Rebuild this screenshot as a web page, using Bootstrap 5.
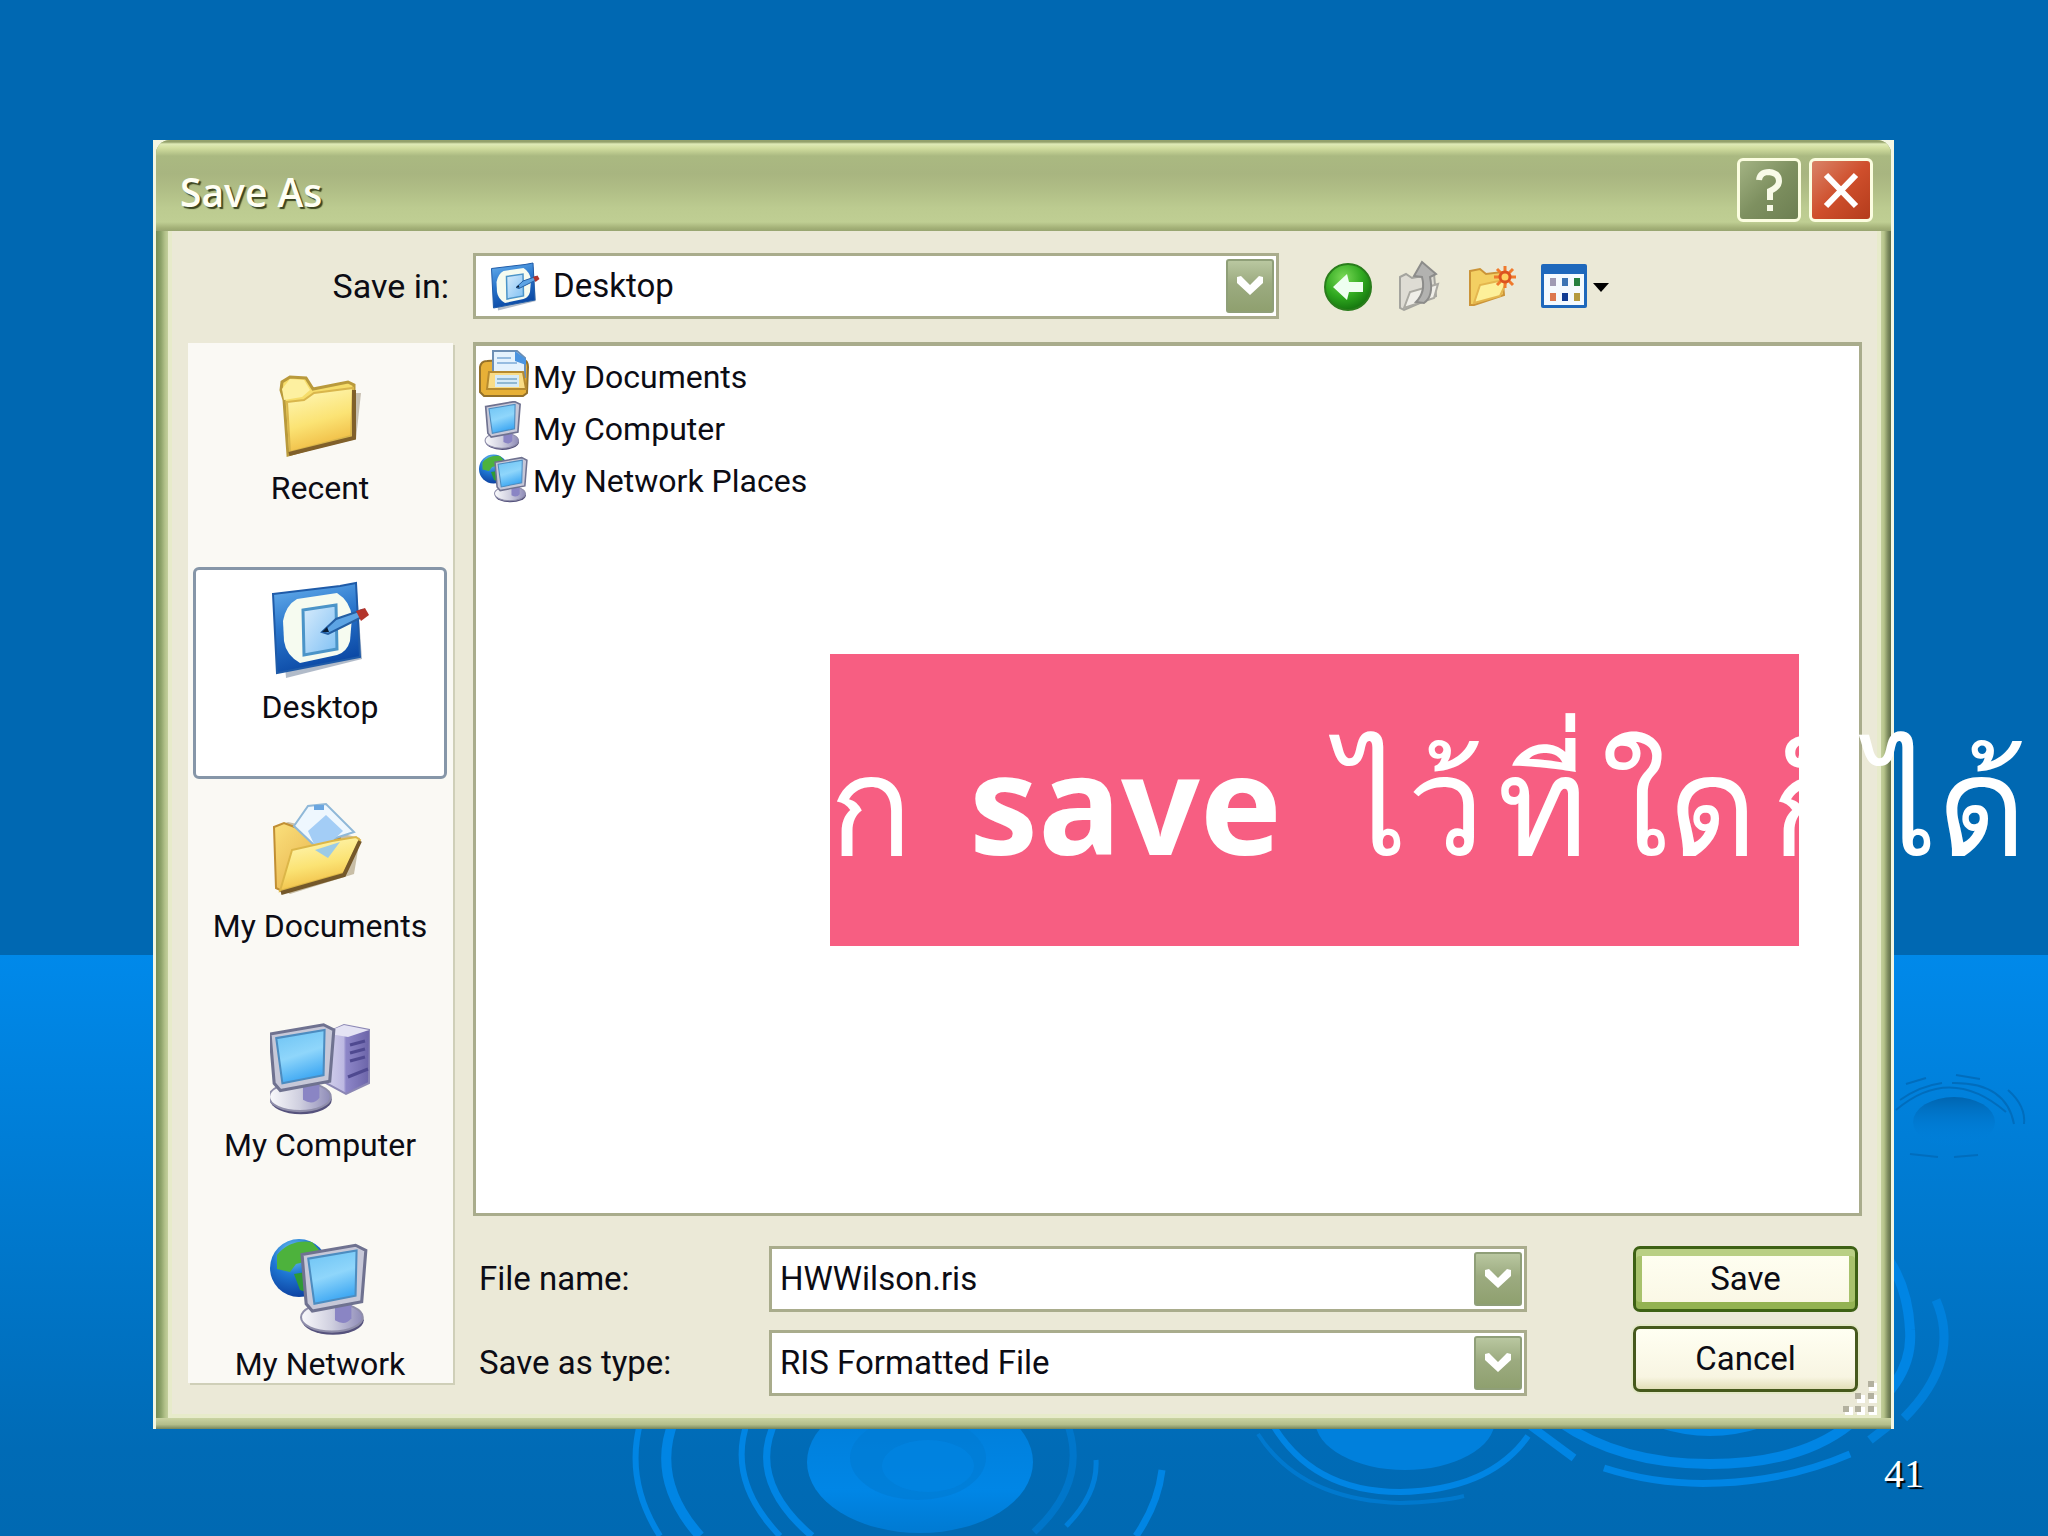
<!DOCTYPE html>
<html lang="en">
<head>
<meta charset="utf-8">
<meta name="viewport" content="width=device-width, initial-scale=1">
<title>Save As</title>
<link href="https://cdn.jsdelivr.net/npm/bootstrap@5.3.0/dist/css/bootstrap.min.css" rel="stylesheet">
<style>
body{margin:0;background:#0068b2;font-family:Roboto,"Liberation Sans",sans-serif;font-size:33px;line-height:40px;color:#0c0c14}
.slide{position:relative;min-height:100vh;padding:140px 154px 0 153px;overflow:hidden;background:#0068b2}
.water{position:absolute;inset:0;width:100%;height:100%}
.dialog-frame{position:relative;background:#f3f6e2;padding:0 3px}
.win{border-radius:14px 14px 0 0;background:linear-gradient(90deg,#748c54 0,#8ea36a 5px,#b3c28a 9px,#c3cf9c 12px,#c3cf9c calc(100% - 10px),#b6c38a calc(100% - 7px),#7c8a5e calc(100% - 3px),#5f6d48 100%);padding:0 10px 11px 12px;position:relative}
.win::after{content:"";position:absolute;left:0;right:0;bottom:0;height:11px;background:linear-gradient(#c9d3a2,#b2bd8a 60%,#74845a);z-index:0}
.title-strip{margin:0 -10px 0 -12px;height:91px;padding:0 18px 0 24px;border-radius:14px 14px 0 0;background:linear-gradient(#93a06b 0,#93a06b 2px,#dfeab6 4px,#d2de9f 8px,#aab981 16px,#a8b580 34px,#b0be86 50px,#bccb90 68px,#bfce93 82px,#a3b077 88px,#98a570 91px)}
.title-text{font-family:"Open Sans","Noto Sans",sans-serif;font-weight:600;font-size:39px;line-height:48px;color:#fffff4;text-shadow:2px 2px 1px #3c4520;margin:0;padding-top:12px}
.cap-btn{width:64px;height:64px;padding:0;border:3px solid #fbfde0;border-radius:6px;background:linear-gradient(135deg,#a3b383,#7e9060 50%,#6d7f52);display:block}
.cap-btn svg{display:block;width:100%;height:100%}
.cap-close{background:linear-gradient(135deg,#d98468,#cf4f2c 50%,#b43c1c)}
.face{background:#ebe9d7;padding:22px 19px 20px 20px;box-shadow:inset 4px -4px 0 #e7ebca,inset -4px 0 0 #e7ebca}
.top-row{margin-bottom:23px}
.side-w{width:265px;flex:none}
.look-label{font-size:34px}
.combo{height:66px;background:#fff;border:3px solid #a9ac8c;padding:3px 2px 3px 3px;display:flex;align-items:stretch}
.combo select,.combo input{appearance:none;border:0;background:transparent;outline:0;flex:1 1 0;min-width:0;padding:0;color:inherit;font:inherit;line-height:40px}
.combo-save{width:806px;padding-left:14px;margin-left:20px}
.combo-save select{margin-left:13px}
.arrow-box{width:48px;flex:none;border:2px solid #8f9f78;border-radius:3px;background:linear-gradient(#b9c7a0,#9cab80 45%,#8fa06f);padding:0;display:block}
.arrow-box svg{display:block;width:100%;height:100%}
.tool{border:0;background:none;padding:0;display:block;line-height:0}
.tools{margin-left:45px}
.places{background:#faf9f4;box-shadow:2px 2px 0 #cfcfb8;padding:5px 6px 0 5px;margin:1px 0 15px;display:flex;flex-direction:column;gap:7px;overflow:hidden}
.place{height:212px;border:3px solid transparent;border-radius:6px;background:none;padding:9px 0 0;text-align:center;color:inherit;text-decoration:none;display:block;width:100%;font-size:32px}
.place svg{display:block;width:100px;height:100px;margin:0 auto 8px}
.place-on{background:#fff;border-color:#8696a8}
.place-cut{height:159px}
.right-pane{margin-left:20px}
.files{height:874px;background:#fff;border:3px solid #a9ac8c;border-top-width:4px;position:relative;padding:3px 3px}
.file-row{display:flex;align-items:center;height:52px;font-size:32px;gap:4px;padding-top:3px;color:inherit;text-decoration:none}
.file-row svg{width:50px;height:50px;flex:none;margin-top:-6px}
.note{position:absolute;left:354px;right:60px;top:308px;height:292px;background:#f75e82;display:flex;justify-content:center;align-items:center;white-space:nowrap;color:#fff;font-family:"Noto Sans","Open Sans",sans-serif;font-weight:400;font-size:138px;line-height:200px;padding:2px 0 0 12px;z-index:2}
.note b{font-weight:700;margin:0 20px}
.note i{font-style:normal;margin-right:13px}
.form-area{margin-top:30px}
.entry{display:grid;grid-template-columns:290px 758px;gap:18px 0;padding-left:6px}
.entry .combo{padding-left:8px}
.push{width:225px;height:66px;border:3px solid #46591c;border-radius:7px;background:linear-gradient(#fffff2,#f8f5e2 80%,#e2dfb8);padding:0;color:inherit;display:block;box-shadow:0 0 0 2px #e4e8c8}
.push-main{border-color:#3d6114;background:linear-gradient(#fffff2,#faf7e4);box-shadow:inset 0 7px 0 #b9cf84,inset 0 -7px 0 #93b352,inset 6px 0 0 #a8c26c,inset -6px 0 0 #a8c26c}
.grip{position:absolute;right:14px;bottom:14px;width:36px;height:36px;z-index:1}
.page-no{position:relative;text-align:right;font-family:"Liberation Serif",serif;font-size:40px;line-height:46px;color:#fff;text-shadow:2px 2px 1px #000;margin:0 -30px 0 0;padding-top:22px}
</style>
<script src="https://cdn.jsdelivr.net/npm/bootstrap@5.3.0/dist/js/bootstrap.bundle.min.js"></script>
</head>
<body>
<svg width="0" height="0" class="position-absolute" aria-hidden="true">
<defs>
<linearGradient id="yel" x1="0" y1="0" x2="0.3" y2="1"><stop offset="0" stop-color="#fff9bd"/><stop offset=".6" stop-color="#fbe374"/><stop offset="1" stop-color="#f0bd45"/></linearGradient>
<linearGradient id="yel2" x1="0" y1="0" x2="1" y2="1"><stop offset="0" stop-color="#fbe07c"/><stop offset="1" stop-color="#e0a43c"/></linearGradient>
<linearGradient id="scr" x1="0.2" y1="0" x2="0.5" y2="1"><stop offset="0" stop-color="#6fc4f4"/><stop offset=".5" stop-color="#8fd6fb"/><stop offset="1" stop-color="#38a4f2"/></linearGradient>
<linearGradient id="deskb" x1="0" y1="0" x2="0.3" y2="1"><stop offset="0" stop-color="#6ab2ee"/><stop offset=".5" stop-color="#2a76cc"/><stop offset="1" stop-color="#0c4aa6"/></linearGradient>
<linearGradient id="paper" x1="0" y1="0" x2="1" y2="1"><stop offset="0" stop-color="#d8ecfc"/><stop offset="1" stop-color="#7fc0f4"/></linearGradient>
<linearGradient id="stand" x1="0" y1="0" x2="1" y2="0"><stop offset="0" stop-color="#fafafc"/><stop offset=".5" stop-color="#cfcfdf"/><stop offset="1" stop-color="#8e8bb8"/></linearGradient>
<linearGradient id="tower" x1="0" y1="0" x2="1" y2="0"><stop offset="0" stop-color="#d8d6ee"/><stop offset=".45" stop-color="#bdb9e2"/><stop offset=".5" stop-color="#8d86c8"/><stop offset="1" stop-color="#6b64a8"/></linearGradient>
<radialGradient id="glb" cx=".4" cy=".25" r=".8"><stop offset="0" stop-color="#7fd0f0"/><stop offset=".45" stop-color="#1f78d4"/><stop offset="1" stop-color="#0b3c9c"/></radialGradient>
<radialGradient id="grn" cx=".4" cy=".3" r=".7"><stop offset="0" stop-color="#7bd957"/><stop offset=".6" stop-color="#2fa81f"/><stop offset="1" stop-color="#16780f"/></radialGradient>
<symbol id="i-folder" viewBox="0 0 100 100"><path d="M15 34 21 95 86 79 91 33z" fill="#8a7a60" opacity=".45"/><path d="M11 30 12 22 20 17 36 18 43 29 78 22 84 25 84 76 18 95 14 40z" fill="#f6dd6a" stroke="#b99a3c" stroke-width="3"/><path d="M17 42 34 40 44 33 83 28 81 76 20 92z" fill="url(#yel)" stroke="#d9b64c" stroke-width="2"/><path d="M12 29 20 19 34 20 40 30 32 37 14 40z" fill="#fdf0a0"/><path d="M19 94 84 78 84 30" fill="none" stroke="#80602a" stroke-width="4"/></symbol>
<symbol id="i-desktop" viewBox="0 0 100 100"><path d="M10 21 87 12 92 80 16 99z" fill="#3b5478" opacity=".4"/><path d="M3 15 70 7 86 4 90 78 7 94z" fill="url(#deskb)" stroke="#1f5ba8" stroke-width="2"/><path d="M27 20 67 14Q80 22 82 38L80 62Q77 73 67 76L30 84Q16 76 14 62L13 42Q16 26 27 20z" fill="#f6fbf0"/><path d="M33 31 66 26 67 70 34 76z" fill="url(#paper)" stroke="#4b94c8" stroke-width="3"/><path d="M52 53 66 40 92 31 94 37 74 47 58 55z" fill="#5da4e4" stroke="#245fa4" stroke-width="2"/><path d="M52 53l5-5 2 5z" fill="#091c34"/><path d="M86 32 95 29 99 36 91 42z" fill="#b3352c"/></symbol>
<symbol id="i-docs" viewBox="0 0 100 100"><path d="M8 28 18 24 82 38 90 40 84 76 20 96 9 90z" fill="#7c6632" opacity=".4"/><path d="M4 29 14 25 30 31 50 43 70 40 66 74 12 93 6 90z" fill="url(#yel2)" stroke="#c18f34" stroke-width="2"/><path d="M24 28 38 8 56 6 84 34 44 47z" fill="#eef7fe" stroke="#8fb8d8" stroke-width="2"/><path d="M38 33 56 17 73 33 60 45 44 46z" fill="#a3cdf6"/><path d="M44 7h10v5H44z" fill="#6aa6e0"/><path d="M22 52 62 43 86 39 90 42 74 75 10 93z" fill="url(#yel)" stroke="#dcb648" stroke-width="2"/><path d="M45 52 70 44 58 60z" fill="#9ccbe6"/><path d="M11 95 74 77 90 43" fill="none" stroke="#74582a" stroke-width="4"/></symbol>
<symbol id="i-mon" viewBox="0 0 70 90"><ellipse cx="32" cy="74" rx="30" ry="14" fill="#55527c"/><ellipse cx="31" cy="71" rx="30" ry="14" fill="url(#stand)" stroke="#8f8eaa" stroke-width="2"/><path d="M34 54 50 48 50 72Q44 80 34 74z" fill="#8a85c4"/><path d="M2 10 54 1 64 6 60 56 12 65 6 58z" fill="#c7c8d8" stroke="#6f7290" stroke-width="3"/><path d="M8 14 55 6 54 50 14 58z" fill="url(#scr)" stroke="#4c8cc0" stroke-width="2"/></symbol>
<symbol id="i-pc" viewBox="0 0 100 100"><path d="M52 18 74 8 100 13 99 66 76 77 52 64z" fill="url(#tower)" stroke="#8b87b4" stroke-width="2"/><path d="M54 16 74 8 99 13 78 20z" fill="#e4e3f4"/><path d="M80 28l15-4M80 36l15-4M80 44l15-4M78 60l20-8" stroke="#4f4990" stroke-width="3"/><use href="#i-mon" x="-2" y="4" width="72" height="98"/></symbol>
<symbol id="i-net" viewBox="0 0 100 100"><circle cx="29" cy="32" r="29" fill="url(#glb)"/><path d="M7 19Q20 3 42 6L50 15 42 24 26 28 20 36 7 33z" fill="#4db23c"/><path d="M24 38 36 36 42 44 36 56 30 54z" fill="#2e9a34"/><use href="#i-mon" x="30" y="6" width="72" height="97"/></symbol>
<symbol id="i-mydocs" viewBox="0 0 50 50"><path d="M1 18Q2 12 8 12L44 10Q49 12 49 18L48 44 44 47H5L1 43z" fill="#e7b037" stroke="#94712a" stroke-width="2"/><path d="M14 2H38L46 9V28H14z" fill="#e4f2fd" stroke="#6d8fb4" stroke-width="2"/><path d="M36 2 47 10V16L36 12z" fill="#4a94e0"/><path d="M18 9H32M18 14H38" stroke="#96bce0" stroke-width="2"/><path d="M10 23H44L47 40H8z" fill="#f9dc86" stroke="#b58a30" stroke-width="2"/><path d="M16 26H40V38H16z" fill="#d6ebf8"/><path d="M18 30H38M18 34H38" stroke="#8fb8d4" stroke-width="2"/></symbol>
<symbol id="chev" viewBox="0 0 44 50"><path d="M9 16 13 15 22 24 31 15 35 16 35 22 22 34 9 22z" fill="#fff"/></symbol>
<linearGradient id="sea" x1="0" y1="0" x2="0" y2="1"><stop offset="0" stop-color="#0089ea"/><stop offset=".85" stop-color="#006bb6"/><stop offset="1" stop-color="#0069b2"/></linearGradient>
<linearGradient id="drop" x1="0" y1="0" x2="0" y2="1"><stop offset="0" stop-color="#0065b0"/><stop offset="1" stop-color="#0083e2" stop-opacity="0"/></linearGradient>
<linearGradient id="pool" x1="0" y1="0" x2="0" y2="1"><stop offset="0" stop-color="#007cd6"/><stop offset=".7" stop-color="#0086e6"/><stop offset="1" stop-color="#007ad2"/></linearGradient>
</defs></svg>

<main class="slide">
<svg class="water" viewBox="0 0 2048 1536" preserveAspectRatio="none" aria-hidden="true">
<path d="M0 955H2048V1536H0z" fill="url(#sea)"/>
<g fill="none" stroke="#0085e4">
<ellipse cx="920" cy="1462" rx="113" ry="71" fill="url(#pool)" stroke="none"/>
<ellipse cx="918" cy="1458" rx="68" ry="42" fill="#007cd4" stroke="none" opacity=".7"/>
<ellipse cx="928" cy="1466" rx="46" ry="26" fill="#0084e2" stroke="none" opacity=".7"/>
<path d="M748 1420Q726 1480 780 1536" stroke-width="6"/><path d="M776 1420Q746 1480 812 1536" stroke-width="7"/>
<path d="M641 1420Q624 1480 660 1536" stroke-width="6"/><path d="M674 1420Q650 1480 700 1536" stroke-width="10"/>
<path d="M1066 1420Q1090 1480 1034 1532" stroke-width="7" opacity=".45"/><path d="M1096 1460Q1098 1494 1066 1526" stroke-width="5" opacity=".8"/>
<path d="M1136 1536Q1158 1504 1162 1470" stroke-width="7"/>
<ellipse cx="1405" cy="1420" rx="90" ry="50" fill="#0080dc" stroke="none"/>
<path d="M1270 1420Q1310 1492 1400 1492Q1490 1490 1528 1436" stroke-width="6"/>
<path d="M1258 1434Q1300 1500 1400 1503Q1440 1502 1464 1496" stroke-width="4" opacity=".55"/>
<path d="M1528 1424 1574 1458" stroke-width="8"/>
<path d="M1560 1422Q1620 1464 1710 1464Q1800 1464 1850 1424Q1914 1384 1910 1330Q1908 1290 1890 1262" stroke-width="10"/>
<path d="M1604 1468Q1660 1486 1720 1483Q1790 1480 1850 1454" stroke-width="7"/>
<path d="M1660 1424Q1710 1440 1760 1424" stroke-width="8"/>
<path d="M1936 1300Q1962 1360 1904 1418M1870 1440 1888 1426" stroke-width="9" opacity=".75"/>
</g>
<ellipse cx="1954" cy="1122" rx="41" ry="25" fill="url(#drop)"/>
<g fill="none" stroke="#006dbd" stroke-width="2"><path d="M1896 1110Q1950 1064 2006 1112"/><path d="M1900 1100Q1920 1086 1942 1083M1952 1083Q2006 1082 2014 1124"/><path d="M1906 1084 1926 1078M1956 1075 1980 1079M2008 1090Q2026 1106 2024 1124"/><path d="M1910 1154 1938 1157M1954 1157 1978 1155"/></g>
</svg>

<section class="dialog-frame" aria-label="Save As">
<div class="win">
<header class="title-strip d-flex justify-content-between align-items-center">
<h1 class="title-text">Save As</h1>
<div class="d-flex gap-2 pt-2">
<button class="cap-btn" type="button" aria-label="Help"><svg viewBox="0 0 58 58"><path d="M19 19Q20 11 29 11Q39 12 39 20Q39 26 30 30V39M30 44V50" fill="none" stroke="#f8fae8" stroke-width="6"/></svg></button>
<button class="cap-btn cap-close" type="button" aria-label="Close"><svg viewBox="0 0 58 58"><path d="M14 14 44 45M44 14 14 45" stroke="#fff" stroke-width="6"/></svg></button>
</div>
</header>

<div class="face">
<div class="d-flex align-items-center top-row">
<label class="side-w look-label text-end pe-1" for="savein">Save in:</label>
<div class="combo combo-save">
<svg class="align-self-center flex-shrink-0" width="50" height="50" aria-hidden="true"><use href="#i-desktop"/></svg>
<select id="savein"><option>Desktop</option></select>
<span class="arrow-box" aria-hidden="true"><svg><use href="#chev"/></svg></span>
</div>
<div class="d-flex align-items-center tools">
<button class="tool me-4" type="button" aria-label="Back"><svg width="48" height="50" viewBox="0 0 48 50"><circle cx="24" cy="26" r="23" fill="url(#grn)" stroke="#2a7d1c" stroke-width="2"/><path d="M9 26 23 13 25 21H39V31H25L23 39z" fill="#eefff0"/></svg></button>
<button class="tool me-4" type="button" aria-label="Up one level"><svg width="48" height="52" viewBox="0 0 48 52"><path d="M4 17 10 14 16 18 38 14 40 36 8 50 4 48z" fill="#dedcd4" stroke="#a4a49e" stroke-width="2"/><path d="M8 48 14 32 42 24 38 38z" fill="#efeee8" stroke="#aaa9a2" stroke-width="2"/><path d="M18 16 26 2 40 14 34 17Q38 36 28 43L20 42Q30 32 26 17z" fill="#b2b2b0" stroke="#8c8c8a" stroke-width="2"/></svg></button>
<button class="tool me-4" type="button" aria-label="Create new folder"><svg width="48" height="50" viewBox="0 0 48 50"><path d="M2 10 12 8 18 13 34 11 36 34 6 44 2 44z" fill="#f3cf62" stroke="#cb9438" stroke-width="2"/><path d="M6 42 12 24 40 18 32 35z" fill="#fdf09a" stroke="#e4b64e" stroke-width="2"/><path d="M37 5V27M26 16H48M29 8 45 24M45 8 29 24" stroke="#f07a2c" stroke-width="3"/><circle cx="37" cy="16" r="5" fill="#ffd060" stroke="#dc5220" stroke-width="3"/></svg></button>
<button class="tool" type="button" aria-label="View menu"><svg width="70" height="46" viewBox="0 0 70 46"><rect x="1" y="1" width="46" height="44" rx="2" fill="#1e68bc"/><path d="M4 11H44V42H4z" fill="#f4faff"/><path d="M10 15h6v8h-6z" fill="#9e9ab4"/><path d="M22 15h6v8h-6z" fill="#3c74b4"/><path d="M34 15h6v8h-6z" fill="#258040"/><path d="M10 30h6v8h-6z" fill="#dc7850"/><path d="M22 30h6v8h-6z" fill="#103c94"/><path d="M34 30h6v8h-6z" fill="#b49a40"/><path d="M53 20H69L61 29z"/></svg></button>
</div>
</div>

<div class="d-flex">
<nav class="places side-w" aria-label="Places">
<a class="place" href="#"><svg><use href="#i-folder"/></svg>Recent</a>
<a class="place place-on" href="#"><svg><use href="#i-desktop"/></svg>Desktop</a>
<a class="place" href="#"><svg><use href="#i-docs"/></svg>My Documents</a>
<a class="place" href="#"><svg><use href="#i-pc"/></svg>My Computer</a>
<a class="place place-cut" href="#"><svg><use href="#i-net"/></svg>My Network</a>
</nav>
<div class="flex-grow-1 right-pane">
<div class="files">
<a class="file-row" href="#"><svg><use href="#i-mydocs"/></svg>My Documents</a>
<a class="file-row" href="#"><svg><use href="#i-mon"/></svg>My Computer</a>
<a class="file-row" href="#"><svg><use href="#i-net"/></svg>My Network Places</a>
<div class="note" lang="th"><span>เลือก <b>save</b> <i>ไว้</i><i>ที่</i><i>ใด</i><i>ก็</i>ได้</span></div>
</div>
<div class="d-flex justify-content-between form-area">
<div class="entry align-items-center">
<label for="fname">File name:</label>
<div class="combo"><input id="fname" type="text" value="HWWilson.ris"><button class="arrow-box" type="button" aria-label="Recent names"><svg><use href="#chev"/></svg></button></div>
<label for="ftype">Save as type:</label>
<div class="combo"><select id="ftype"><option>RIS Formatted File</option></select><span class="arrow-box" aria-hidden="true"><svg><use href="#chev"/></svg></span></div>
</div>
<div class="d-flex flex-column justify-content-between me-1 pb-1">
<button class="push push-main" type="submit">Save</button>
<button class="push" type="button">Cancel</button>
</div>
</div>
</div>
</div>
</div>
<svg class="grip" viewBox="0 0 36 36" aria-hidden="true"><path d="M28 4h8v8h-8zM16 16h8v8h-8zM28 16h8v8h-8zM4 28h8v8H4zM16 28h8v8h-8zM28 28h8v8h-8z" fill="#fff"/><path d="M27 2h6v6h-6zM14 14h6v6h-6zM27 14h6v6h-6zM2 27h6v6H2zM14 27h6v6h-6zM27 27h6v6h-6z" fill="#b3b19f"/></svg>
</div>
</section>
<p class="page-no">41</p>
</main>
</body>
</html>
